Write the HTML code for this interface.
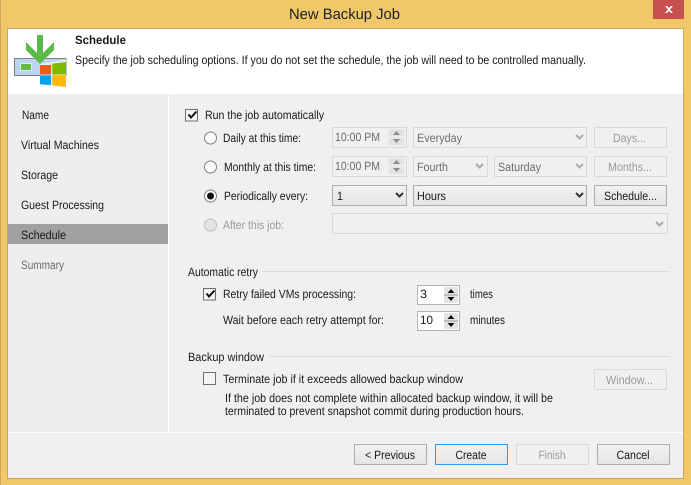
<!DOCTYPE html>
<html><head><meta charset="utf-8"><style>
html,body{margin:0;padding:0;width:691px;height:485px;overflow:hidden;background:#f0c869}
svg{display:block}
text{font-family:"Liberation Sans",sans-serif;font-size:12px;fill:#1a1a1a;text-rendering:geometricPrecision}
.d{fill:#9a9a9a}
.l{fill:#6d6d6d}
.b{fill:url(#g);stroke:#adadad}
.x{fill:none;stroke:#d9d9d9}
.w{fill:#fff;stroke:#b4b4b4}
.ck{fill:#f4f4f4;stroke:#707070}
.rd{fill:#fbfbfb;stroke:#808080}
.ln{stroke:#dcdcdc;stroke-width:1}
</style></head><body>
<svg width="691" height="485" viewBox="0 0 691 485" xmlns="http://www.w3.org/2000/svg">
<defs><linearGradient id="g" x1="0" y1="0" x2="0" y2="1"><stop offset="0" stop-color="#f2f2f2"/><stop offset="1" stop-color="#e4e4e4"/></linearGradient></defs>
<rect width="691" height="485" fill="#f0c869"/>
<rect x="0" y="0" width="1" height="485" fill="#c9a85c"/>
<rect x="7.5" y="28.5" width="676" height="450" fill="#f0f0f0" stroke="#c9a85c"/>
<rect x="653" y="0" width="31" height="19" fill="#c75050"/>
<path d="M665 6l2 0 2 2 2-2 2 0-3 3.500 3 3.500-2 0-2-2-2 2-2 0 3-3.500z" fill="#fff"/>
<text x="289" y="19" textLength="111" lengthAdjust="spacingAndGlyphs" style="font-size:15px;fill:#222">New Backup Job</text>

<rect x="8" y="29" width="675" height="65" fill="#fff"/>
<rect x="14.500" y="58.500" width="51.500" height="17" fill="#bcd5ee" stroke="#7f7f7f"/>
<rect x="20" y="63" width="12" height="8" fill="#dbe8f5"/>
<rect x="21" y="64" width="10" height="6" fill="#66bb46"/>
<path d="M40 64L66 59.500V87.500L40 85z" fill="#e4eef8"/>
<rect x="40" y="65" width="11" height="9.500" fill="#f25a1d"/>
<path d="M52.300 63.800L66 62V74.500H52.300z" fill="#7fba00"/>
<path d="M40 75.300H51V85L40 84.300z" fill="#00a4ef"/>
<path d="M52.300 75.300H66V87L52.300 85.300z" fill="#ffb900"/>
<path d="M37 35H43V53L54 42V50L40 64L26 50V42L37 53z" fill="#5bb94a"/>
<text x="75" y="44" textLength="51" lengthAdjust="spacingAndGlyphs" style="font-weight:700">Schedule</text>
<text x="75" y="64" textLength="511" lengthAdjust="spacingAndGlyphs">Specify the job scheduling options. If you do not set the schedule, the job will need to be controlled manually.</text>

<rect x="8" y="94" width="160" height="338" fill="#eeeeee"/>
<rect x="168" y="94" width="1" height="338" fill="#fff"/>
<rect x="8" y="432" width="675" height="1" fill="#fff"/>
<rect x="8" y="224" width="160" height="20" fill="#a0a0a0"/>
<text x="22" y="119" textLength="27" lengthAdjust="spacingAndGlyphs">Name</text>
<text x="21" y="149" textLength="78" lengthAdjust="spacingAndGlyphs">Virtual Machines</text>
<text x="21" y="179" textLength="37" lengthAdjust="spacingAndGlyphs">Storage</text>
<text x="21" y="209" textLength="83" lengthAdjust="spacingAndGlyphs">Guest Processing</text>
<text x="21" y="239" textLength="45" lengthAdjust="spacingAndGlyphs">Schedule</text>
<text x="21" y="269" textLength="43" lengthAdjust="spacingAndGlyphs" class="l">Summary</text>

<rect x="185.500" y="109.500" width="12" height="11.500" class="ck"/>
<path d="M188.500 114.500L191 117.500L196.500 111.500" fill="none" stroke="#111" stroke-width="2"/>
<text x="205" y="119" textLength="119" lengthAdjust="spacingAndGlyphs">Run the job automatically</text>

<circle cx="210.500" cy="138" r="6" class="rd"/>
<text x="223" y="142" textLength="78" lengthAdjust="spacingAndGlyphs">Daily at this time:</text>
<rect x="332.500" y="127.500" width="74" height="20" class="x"/>
<text x="335" y="141" textLength="45" lengthAdjust="spacingAndGlyphs" class="l">10:00 PM</text>
<rect x="389" y="129" width="15" height="16" fill="#e2e2e2"/><rect x="389" y="136.500" width="15" height="1" fill="#f6f6f6"/>
<path d="M393 135l3.500-4 3.500 4z" fill="#8a8a8a"/><path d="M393 139h7l-3.500 4z" fill="#8a8a8a"/>
<rect x="413.500" y="127.500" width="173" height="20" class="x"/>
<text x="417" y="142" textLength="45" lengthAdjust="spacingAndGlyphs" class="l">Everyday</text>
<path d="M576 135l3.500 3.500 3.500-3.500" fill="none" stroke="#aaa" stroke-width="2"/>
<rect x="594.500" y="127.500" width="72" height="20" class="x"/>
<text x="613" y="142" textLength="33" lengthAdjust="spacingAndGlyphs" class="d">Days...</text>

<circle cx="210.500" cy="167" r="6" class="rd"/>
<text x="224" y="171" textLength="92" lengthAdjust="spacingAndGlyphs">Monthly at this time:</text>
<rect x="332.500" y="156.500" width="74" height="20" class="x"/>
<text x="335" y="170" textLength="45" lengthAdjust="spacingAndGlyphs" class="l">10:00 PM</text>
<rect x="389" y="158" width="15" height="16" fill="#e2e2e2"/><rect x="389" y="165.500" width="15" height="1" fill="#f6f6f6"/>
<path d="M393 164l3.500-4 3.500 4z" fill="#8a8a8a"/><path d="M393 168h7l-3.500 4z" fill="#8a8a8a"/>
<rect x="413.500" y="156.500" width="74" height="20" class="x"/>
<text x="417" y="171" textLength="31" lengthAdjust="spacingAndGlyphs" class="l">Fourth</text>
<path d="M476 164l3.500 3.500 3.500-3.500" fill="none" stroke="#aaa" stroke-width="2"/>
<rect x="494.500" y="156.500" width="92" height="20" class="x"/>
<text x="498" y="171" textLength="43" lengthAdjust="spacingAndGlyphs" class="l">Saturday</text>
<path d="M576 164l3.500 3.500 3.500-3.500" fill="none" stroke="#aaa" stroke-width="2"/>
<rect x="594.500" y="156.500" width="72" height="20" class="x"/>
<text x="608" y="171" textLength="44" lengthAdjust="spacingAndGlyphs" class="d">Months...</text>

<circle cx="210.500" cy="196" r="6" class="rd"/><circle cx="210.500" cy="196" r="3.500" fill="#111"/>
<text x="224" y="200" textLength="84" lengthAdjust="spacingAndGlyphs">Periodically every:</text>
<rect x="332.500" y="185.500" width="74" height="20" class="b"/>
<text x="337" y="200" textLength="6" lengthAdjust="spacingAndGlyphs">1</text>
<path d="M396 193l3.500 3.500 3.500-3.500" fill="none" stroke="#333" stroke-width="2"/>
<rect x="413.500" y="185.500" width="173" height="20" class="b"/>
<text x="417" y="200" textLength="29" lengthAdjust="spacingAndGlyphs">Hours</text>
<path d="M576 193l3.500 3.500 3.500-3.500" fill="none" stroke="#333" stroke-width="2"/>
<rect x="594.500" y="185.500" width="72" height="20" class="b"/>
<text x="604" y="200" textLength="53" lengthAdjust="spacingAndGlyphs">Schedule...</text>

<circle cx="210.500" cy="225" r="6" fill="#e4e4e4" stroke="#bdbdbd"/>
<text x="223" y="229" textLength="61" lengthAdjust="spacingAndGlyphs" class="d">After this job:</text>
<rect x="332.500" y="213.500" width="335" height="20" class="x"/>
<path d="M656 222l3.500 3.500 3.500-3.500" fill="none" stroke="#aaa" stroke-width="2"/>

<text x="188" y="276" textLength="70" lengthAdjust="spacingAndGlyphs">Automatic retry</text>
<line x1="262" y1="271.500" x2="670" y2="271.500" class="ln"/>
<rect x="203.500" y="288.500" width="12" height="11.500" class="ck"/>
<path d="M206.500 293.500L209 296.500L214.500 290.500" fill="none" stroke="#111" stroke-width="2"/>
<text x="223" y="298" textLength="133" lengthAdjust="spacingAndGlyphs">Retry failed VMs processing:</text>
<rect x="417.500" y="285.500" width="42" height="19" class="w"/>
<text x="420" y="298" textLength="7" lengthAdjust="spacingAndGlyphs">3</text>
<rect x="444" y="287" width="14" height="16" fill="#e4e4e4"/><rect x="444" y="294.500" width="14" height="1" fill="#9a9a9a"/>
<path d="M447.500 293l3.500-4 3.500 4z" fill="#111"/><path d="M447.500 297h7l-3.500 4z" fill="#111"/>
<text x="470" y="298" textLength="23" lengthAdjust="spacingAndGlyphs">times</text>

<text x="223" y="324" textLength="161" lengthAdjust="spacingAndGlyphs">Wait before each retry attempt for:</text>
<rect x="417.500" y="311.500" width="42" height="19" class="w"/>
<text x="420" y="324" textLength="13" lengthAdjust="spacingAndGlyphs">10</text>
<rect x="444" y="313" width="14" height="16" fill="#e4e4e4"/><rect x="444" y="320.500" width="14" height="1" fill="#9a9a9a"/>
<path d="M447.500 319l3.500-4 3.500 4z" fill="#111"/><path d="M447.500 323h7l-3.500 4z" fill="#111"/>
<text x="470" y="324" textLength="35" lengthAdjust="spacingAndGlyphs">minutes</text>

<text x="188" y="361" textLength="76" lengthAdjust="spacingAndGlyphs">Backup window</text>
<line x1="268" y1="356.500" x2="670" y2="356.500" class="ln"/>
<rect x="203.500" y="372.500" width="12" height="12" class="ck"/>
<text x="223" y="383" textLength="240" lengthAdjust="spacingAndGlyphs">Terminate job if it exceeds allowed backup window</text>
<rect x="594.500" y="369.500" width="72" height="20" class="x"/>
<text x="606" y="384" textLength="47" lengthAdjust="spacingAndGlyphs" class="d">Window...</text>
<text x="225" y="402" textLength="328" lengthAdjust="spacingAndGlyphs">If the job does not complete within allocated backup window, it will be</text>
<text x="225" y="415" textLength="299" lengthAdjust="spacingAndGlyphs">terminated to prevent snapshot commit during production hours.</text>

<rect x="354.500" y="444.500" width="72" height="20" class="b"/>
<text x="365" y="459" textLength="50" lengthAdjust="spacingAndGlyphs">&lt; Previous</text>
<rect x="435.500" y="444.500" width="72" height="20" class="b" style="stroke:#3399ff"/>
<text x="455.500" y="459" textLength="31" lengthAdjust="spacingAndGlyphs">Create</text>
<rect x="516.500" y="444.500" width="72" height="20" class="x"/>
<text x="538.500" y="459" textLength="27" lengthAdjust="spacingAndGlyphs" class="d">Finish</text>
<rect x="597.500" y="444.500" width="72" height="20" class="b"/>
<text x="616.500" y="459" textLength="33" lengthAdjust="spacingAndGlyphs">Cancel</text>
</svg>
</body></html>
